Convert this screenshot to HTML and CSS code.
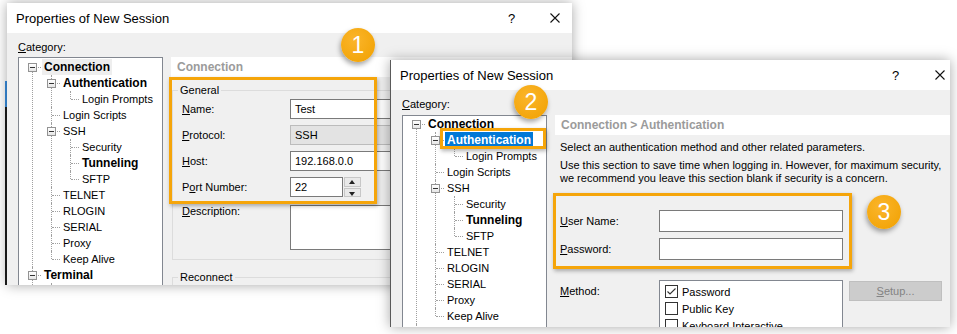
FILE: index.html
```html
<!DOCTYPE html>
<html lang="en">

<head>
    <meta charset="utf-8">
    <meta name="viewport" content="width=device-width, initial-scale=1.0">
    <title>Properties of New Session</title>

    <link rel="stylesheet" href="styles.css">
</head>

<body>

    <div class="desk">
        <div class="edge edge-blue"></div>
        <div class="edge edge-dark"></div>

        <!-- back window: Connection -->
        <section class="win win-back">
            <div class="titlebar">
                <span class="title">Properties of New Session</span>
                <span class="help">?</span>
                <span class="close"><svg width="10" height="10" viewBox="0 0 10 10"><path d="M0.5 0.5L9.5 9.5M9.5 0.5L0.5 9.5" stroke="#111" stroke-width="1.1" fill="none"/></svg></span>
            </div>
            <div class="body">
                <div class="cat-col">
                    <div class="cat-label"><u>C</u>ategory:</div>
                    <div class="tree">
                        <ul>
                            <li><div class="row"><span class="box"></span><span class="lbl b soft">Connection</span></div>
                                <ul>
                                    <li><div class="row"><span class="box"></span><span class="lbl b">Authentication</span></div>
                                        <ul>
                                            <li><div class="row"><span class="lbl">Login Prompts</span></div></li>
                                        </ul>
                                    </li>
                                    <li><div class="row"><span class="lbl">Login Scripts</span></div></li>
                                    <li><div class="row"><span class="box"></span><span class="lbl">SSH</span></div>
                                        <ul>
                                            <li><div class="row"><span class="lbl">Security</span></div></li>
                                            <li><div class="row"><span class="lbl b">Tunneling</span></div></li>
                                            <li><div class="row"><span class="lbl">SFTP</span></div></li>
                                        </ul>
                                    </li>
                                    <li><div class="row"><span class="lbl">TELNET</span></div></li>
                                    <li><div class="row"><span class="lbl">RLOGIN</span></div></li>
                                    <li><div class="row"><span class="lbl">SERIAL</span></div></li>
                                    <li><div class="row"><span class="lbl">Proxy</span></div></li>
                                    <li><div class="row"><span class="lbl">Keep Alive</span></div></li>
                                </ul>
                            </li>
                            <li><div class="row"><span class="box"></span><span class="lbl b">Terminal</span></div>
                                <ul>
                                    <li><div class="row"></div></li>
                                    <li><div class="row"></div></li>
                                </ul>
                            </li>
                            <li><div class="row"></div></li>
                        </ul>
                    </div>
                </div>

                <div class="panel">
                    <div class="panel-head">Connection</div>
                    <fieldset class="group">
                        <legend>General</legend>
                        <div class="form">
                            <label><u>N</u>ame:</label>
                            <div class="field">Test</div>
                            <label><u>P</u>rotocol:</label>
                            <div class="field combo">SSH</div>
                            <label><u>H</u>ost:</label>
                            <div class="field">192.168.0.0</div>
                            <label>P<u>o</u>rt Number:</label>
                            <div class="port">
                                <div class="field small">22</div>
                                <div class="spin">
                                    <span class="up"></span>
                                    <span class="down"></span>
                                </div>
                            </div>
                            <label class="top"><u>D</u>escription:</label>
                            <div class="field area"></div>
                        </div>
                    </fieldset>
                    <fieldset class="group">
                        <legend>Reconnect</legend>
                    </fieldset>
                </div>
            </div>
        </section>

        <!-- front window: Authentication -->
        <section class="win win-front">
            <div class="titlebar">
                <span class="title">Properties of New Session</span>
                <span class="help">?</span>
                <span class="close"><svg width="10" height="10" viewBox="0 0 10 10"><path d="M0.5 0.5L9.5 9.5M9.5 0.5L0.5 9.5" stroke="#111" stroke-width="1.1" fill="none"/></svg></span>
            </div>
            <div class="body">
                <div class="cat-col">
                    <div class="cat-label"><u>C</u>ategory:</div>
                    <div class="tree">
                        <ul>
                            <li><div class="row"><span class="box"></span><span class="lbl b">Connection</span></div>
                                <ul>
                                    <li><div class="row"><span class="box"></span><span class="lbl b picked">Authentication</span></div>
                                        <ul>
                                            <li><div class="row"><span class="lbl">Login Prompts</span></div></li>
                                        </ul>
                                    </li>
                                    <li><div class="row"><span class="lbl">Login Scripts</span></div></li>
                                    <li><div class="row"><span class="box"></span><span class="lbl">SSH</span></div>
                                        <ul>
                                            <li><div class="row"><span class="lbl">Security</span></div></li>
                                            <li><div class="row"><span class="lbl b">Tunneling</span></div></li>
                                            <li><div class="row"><span class="lbl">SFTP</span></div></li>
                                        </ul>
                                    </li>
                                    <li><div class="row"><span class="lbl">TELNET</span></div></li>
                                    <li><div class="row"><span class="lbl">RLOGIN</span></div></li>
                                    <li><div class="row"><span class="lbl">SERIAL</span></div></li>
                                    <li><div class="row"><span class="lbl">Proxy</span></div></li>
                                    <li><div class="row"><span class="lbl">Keep Alive</span></div></li>
                                </ul>
                            </li>
                            <li><div class="row"></div></li>
                            <li><div class="row"></div></li>
                        </ul>
                    </div>
                </div>

                <div class="panel">
                    <div class="panel-head">Connection &gt; Authentication</div>
                    <p class="note">Select an authentication method and other related parameters.</p>
                    <p class="note">Use this section to save time when logging in. However, for maximum security,<br>we recommend you leave this section blank if security is a concern.</p>
                    <div class="login">
                        <label><u>U</u>ser Name:</label>
                        <div class="field wide"></div>
                        <label><u>P</u>assword:</label>
                        <div class="field wide"></div>
                    </div>
                    <div class="method">
                        <label><u>M</u>ethod:</label>
                        <div class="checklist">
                            <div class="check"><span class="cb"><svg width="11" height="11" viewBox="0 0 11 11"><path d="M1.5 5.5L4 8L9.5 2.5" stroke="#333" stroke-width="1.1" fill="none"/></svg></span>Password</div>
                            <div class="check"><span class="cb"></span>Public Key</div>
                            <div class="check"><span class="cb"></span>Keyboard Interactive</div>
                        </div>
                        <button class="setup" disabled><u>S</u>etup...</button>
                    </div>
                </div>
            </div>
        </section>

        <!-- callouts -->
        <div class="mark mark-1"></div>
        <div class="mark mark-2"></div>
        <div class="mark mark-3"></div>
        <div class="badge badge-1">1</div>
        <div class="badge badge-2">2</div>
        <div class="badge badge-3">3</div>
    </div>

</body>

</html>
```

FILE: styles.css
```css
body {
    margin: 0;
    background-color: white;
    font-family: "Liberation Sans", Arial, sans-serif;
    font-size: 11px;
    color: #000;
}

.desk {
    position: relative;
    width: 957px;
    height: 334px;
    overflow: hidden;
    background-color: white;
}

/* bits of the desktop behind the back window */
.edge {
    position: absolute;
    left: 5px;
    width: 2px;
}

.edge-blue {
    top: 81px;
    height: 26px;
    background-color: #3a8fe0;
}

.edge-dark {
    top: 107px;
    height: 178px;
    background-color: #1e1e1e;
}

/* WINDOWS */
.win {
    position: absolute;
    box-sizing: border-box;
    background-color: #f0f0f0;
    overflow: hidden;
    box-shadow: 0 0 12px rgba(0, 0, 0, 0.35);
}

.win-back {
    left: 7px;
    top: 3px;
    width: 565px;
    height: 282px;
}

.win-front {
    left: 390px;
    top: 60px;
    width: 560px;
    height: 267px;
    border-left: 1px solid #5a5a5a;
}

.titlebar {
    display: flex;
    align-items: center;
    height: 30px;
    padding-left: 9px;
    background-color: white;
    font-size: 13px;
}

.title {
    flex: 1;
}

.help {
    width: 42px;
    font-size: 13px;
}

.close {
    display: flex;
    width: 22px;
}

.win-front .help {
    width: 43px;
}

.win-front .close {
    width: 15px;
}

.body {
    display: flex;
    padding-left: 11px;
}

.cat-col {
    width: 145px;
    margin-right: 8px;
}

.cat-label {
    box-sizing: border-box;
    height: 24px;
    padding-top: 6px;
    line-height: 16px;
}

.win-front .cat-label {
    height: 25px;
}

/* TREE */
.tree {
    height: 300px;
    border: 1px solid #828790;
    background-color: white;
    padding-top: 1px;
}

.win-front .tree {
    padding-top: 0;
}

.tree ul {
    list-style: none;
    margin: 0;
    padding: 0;
}

.tree ul ul {
    padding-left: 19px;
}

.tree li {
    position: relative;
}

.tree li::before {
    content: "";
    position: absolute;
    left: 13px;
    top: 0;
    bottom: 0;
    border-left: 1px dotted #a0a0a0;
}

.tree li:last-child::before {
    bottom: auto;
    height: 8px;
}

.tree > ul > li:first-child::before {
    top: 8px;
}

.row {
    position: relative;
    display: flex;
    align-items: center;
    height: 16px;
    padding-left: 23px;
}

.row::before {
    content: "";
    position: absolute;
    left: 14px;
    top: 8px;
    width: 8px;
    border-top: 1px dotted #a0a0a0;
}

.box {
    position: absolute;
    z-index: 1;
    left: 9px;
    top: 4px;
    box-sizing: border-box;
    width: 9px;
    height: 9px;
    border: 1px solid #939393;
    background: linear-gradient(#ffffff, #e6e6e6);
}

.box::after {
    content: "";
    position: absolute;
    left: 1px;
    top: 3px;
    width: 5px;
    height: 1px;
    background-color: #333;
}

.lbl {
    padding: 0 2px;
    line-height: 16px;
    white-space: nowrap;
}

.b {
    font-weight: bold;
    font-size: 12px;
}

.soft {
    background-color: #eeeeee;
}

.picked {
    background-color: #0078d7;
    color: white;
}

/* RIGHT PANEL */
.panel {
    flex: 1;
    margin-top: 24px;
}

.win-front .panel {
    margin-top: 25px;
}

.panel-head {
    height: 20px;
    line-height: 20px;
    padding-left: 6px;
    background-color: white;
    color: #9b9b9b;
    font-weight: bold;
    font-size: 12px;
}

.group {
    margin: 6px 0 0 1px;
    padding: 2px 0 10px 9px;
    border: 1px solid #dcdcdc;
    min-width: 0;
}

.group + .group {
    margin-top: 10px;
    height: 40px;
}

.group legend {
    margin-left: -4px;
    padding: 0 2px;
    line-height: 14px;
}

.form {
    display: grid;
    grid-template-columns: 108px 1fr;
    grid-auto-rows: 20px;
    row-gap: 6px;
    align-items: center;
}

.form label.top {
    align-self: start;
    margin-top: 2px;
}

.field {
    box-sizing: border-box;
    height: 20px;
    width: 240px;
    padding-left: 4px;
    line-height: 18px;
    border: 1px solid #7a7a7a;
    background-color: white;
}

.field.combo {
    background-color: #e3e3e3;
    border-color: #bcbcbc;
}

.field.small {
    width: 53px;
}

.field.area {
    height: 45px;
    margin-top: 2px;
    align-self: start;
}

.form .area {
    grid-row: span 2;
}

.port {
    display: flex;
}

.spin {
    display: flex;
    flex-direction: column;
    gap: 1px;
    width: 17px;
    height: 20px;
    margin-left: 1px;
}

.spin span {
    position: relative;
    flex: 1;
    box-sizing: border-box;
    border: 1px solid #c7c7c7;
    background-color: #e9e9e9;
}

.spin span::after {
    content: "";
    position: absolute;
    left: 4px;
    top: 2px;
    border-left: 3px solid transparent;
    border-right: 3px solid transparent;
}

.spin .up::after {
    border-bottom: 4px solid #222;
}

.spin .down::after {
    top: 3px;
    border-top: 4px solid #222;
}

/* authentication page */
.note {
    margin: 6px 0 0 5px;
    line-height: 13px;
}

.note + .note {
    margin-top: 5px;
}

.login {
    display: grid;
    grid-template-columns: 99px 184px;
    grid-auto-rows: 22px;
    row-gap: 6px;
    align-items: center;
    margin: 25px 0 0 5px;
}

.field.wide {
    width: 184px;
    height: 22px;
}

.method {
    display: flex;
    align-items: flex-start;
    margin: 20px 0 0 5px;
}

.method label {
    width: 99px;
    margin-top: 5px;
}

.checklist {
    box-sizing: border-box;
    width: 184px;
    height: 90px;
    padding: 2px 0 0 5px;
    border: 1px solid #828790;
    background-color: white;
}

.check {
    display: flex;
    align-items: center;
    gap: 4px;
    height: 17px;
}

.cb {
    display: flex;
    align-items: center;
    justify-content: center;
    box-sizing: border-box;
    width: 13px;
    height: 13px;
    border: 1px solid #333;
    background-color: white;
}

.setup {
    width: 93px;
    height: 20px;
    margin: 1px 0 0 6px;
    padding: 0;
    border: 1px solid #bfbfbf;
    background-color: #cccccc;
    color: #838383;
    font-family: inherit;
    font-size: 11px;
}

/* CALLOUTS */
.mark {
    position: absolute;
    box-sizing: border-box;
    border: 3px solid #f5a50a;
    box-shadow: 1px 2px 4px rgba(0, 0, 0, 0.3);
}

.mark-1 {
    left: 169px;
    top: 77px;
    width: 208px;
    height: 127px;
}

.mark-2 {
    left: 440px;
    top: 128px;
    width: 106px;
    height: 21px;
}

.mark-3 {
    left: 553px;
    top: 193px;
    width: 299px;
    height: 76px;
}

.badge {
    position: absolute;
    display: flex;
    align-items: center;
    justify-content: center;
    width: 34px;
    height: 34px;
    border-radius: 50%;
    background: radial-gradient(circle at 40% 35%, #fbb52a, #f0a000);
    box-shadow: -1px 3px 5px rgba(0, 0, 0, 0.35);
    color: white;
    font-size: 23px;
}

.badge-1 {
    left: 341px;
    top: 28px;
}

.badge-2 {
    left: 514px;
    top: 85px;
}

.badge-3 {
    left: 867px;
    top: 195px;
}
```
